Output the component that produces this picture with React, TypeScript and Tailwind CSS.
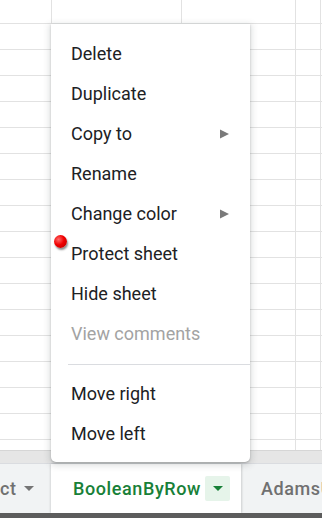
import React from "react";

const rows = Array.from({ length: 17 }, (_, i) => i);

type Item = { label: string; sub?: boolean; disabled?: boolean };

const itemsTop: Item[] = [
  { label: "Delete" },
  { label: "Duplicate" },
  { label: "Copy to", sub: true },
  { label: "Rename" },
  { label: "Change color", sub: true },
  { label: "Protect sheet" },
  { label: "Hide sheet" },
  { label: "View comments", disabled: true },
];

const itemsBottom: Item[] = [{ label: "Move right" }, { label: "Move left" }];

function MenuRow({ item }: { item: Item }) {
  return (
    <div className="flex h-[40px] items-center justify-between pl-[20px] pr-[21px]">
      <span className={item.disabled ? "text-[#a3a3a3]" : "text-[#202124]"}>{item.label}</span>
      {item.sub && (
        <svg width="9" height="10" viewBox="0 0 9 10" className="mt-[1px]">
          <path d="M0 0.5 L9 5 L0 9.5 Z" fill="#7a7a7a" />
        </svg>
      )}
    </div>
  );
}

function Caret({ color }: { color: string }) {
  return (
    <svg width="10" height="5" viewBox="0 0 10 5">
      <path d="M0 0 L10 0 L5 5 Z" fill={color} />
    </svg>
  );
}

export default function App() {
  return (
    <div className="relative flex h-[518px] w-[322px] flex-col overflow-hidden bg-white font-['Roboto',sans-serif]">
      {/* sheet grid */}
      <div className="flex h-[450px] flex-col">
        {rows.map((r) => (
          <div
            key={r}
            className={`flex border-b border-[#e2e2e2] ${r === 0 ? "h-[24px]" : "h-[26px]"}`}
          >
            <div className="w-[52px] border-r border-[#e2e2e2]" />
            <div className="w-[130px] border-r border-[#e2e2e2]" />
            <div className="w-[114px] border-r border-[#e2e2e2]" />
            <div className="w-[25px] border-r border-[#e2e2e2]" />
            <div className="flex-1" />
          </div>
        ))}
        <div className="flex flex-1">
          <div className="w-[52px] border-r border-[#e2e2e2]" />
          <div className="w-[130px] border-r border-[#e2e2e2]" />
          <div className="w-[114px] border-r border-[#e2e2e2]" />
          <div className="w-[25px] border-r border-[#e2e2e2]" />
        </div>
      </div>

      {/* scrollbar strip */}
      <div className="h-[13px] border-t border-[#d6d6d6] bg-[#e6e6e6]" />

      {/* sheet tabs */}
      <div className="flex h-[50px] items-center border-t border-[#dadce0] bg-[#f1f3f4] text-[18px] font-medium tracking-[0.6px]">
        <div className="flex w-[51px] shrink-0 items-center gap-[7px] text-[#707070]">
          <span>ct</span>
          <Caret color="#757575" />
        </div>
        <div className="flex h-full w-[190px] shrink-0 items-center bg-white pl-[22px] shadow-[1px_0_2px_rgba(0,0,0,0.15),-1px_0_2px_rgba(0,0,0,0.1)]">
          <span className="text-[#188038]">BooleanByRow</span>
          <div className="ml-[4px] flex h-[25px] w-[25px] items-center justify-center rounded-[2px] bg-[#e6f4ea]">
            <Caret color="#188038" />
          </div>
        </div>
        <div className="shrink-0 whitespace-nowrap pl-[20px] text-[#707070]">AdamsU</div>
      </div>

      {/* bottom dark edge */}
      <div className="h-[5px] bg-[#5c5c5c]" />

      {/* context menu */}
      <div className="absolute left-[51px] top-[24px] w-[199px] rounded-b-[5px] bg-white pb-[9px] pt-[9px] text-[18px] shadow-[0_2px_6px_2px_rgba(60,64,67,0.15),0_1px_2px_rgba(60,64,67,0.3)]">
        {itemsTop.map((it) => (
          <MenuRow key={it.label} item={it} />
        ))}
        <div className="mb-[8px] ml-[17px] mt-[11px] h-px bg-[#dadce0]" />
        {itemsBottom.map((it) => (
          <MenuRow key={it.label} item={it} />
        ))}
      </div>

      {/* red pointer dot */}
      <div className="absolute left-[54px] top-[235px] h-[13px] w-[13px] rounded-full bg-[radial-gradient(circle_at_35%_35%,#ff6a6a,#f00000_45%,#b00000)] shadow-[1px_2px_2px_rgba(0,0,0,0.45)]" />
    </div>
  );
}
